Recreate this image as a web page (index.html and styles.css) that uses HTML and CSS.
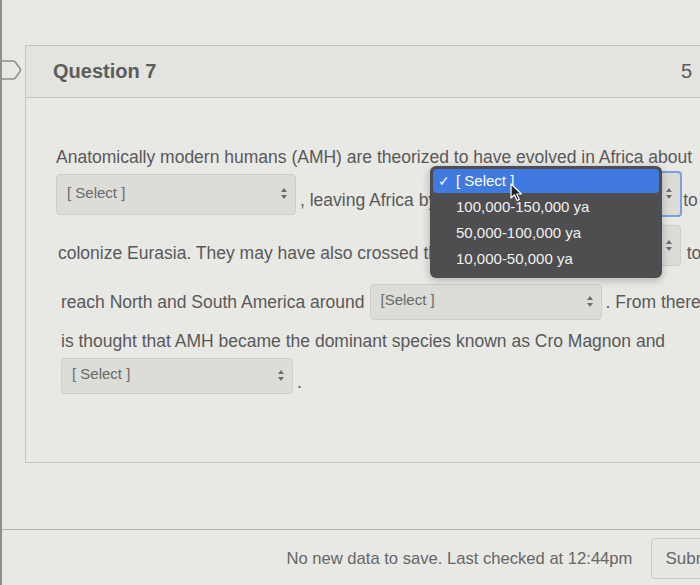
FILE: index.html
```html
<!DOCTYPE html>
<html lang="en">
<head>
    <meta charset="UTF-8">
    <meta name="viewport" content="width=device-width, initial-scale=1.0">
    <title>Quiz - Question 7</title>
    <link rel="stylesheet" href="styles.css">
</head>
<body>

    <div class="page">
        <div class="question-row">
            <svg class="flag" width="20" height="22" viewBox="0 0 20 22">
                <path d="M-4 2 H11 Q12.5 2 13.5 3.3 L18 9.5 Q19 11 18 12.5 L13.5 18.7 Q12.5 20 11 20 H-4" fill="none" stroke="#8c8c8a" stroke-width="1.5"/>
            </svg>

            <div class="question">
                <div class="q-header">
                    <span class="q-name">Question 7</span>
                    <span class="q-points">5</span>
                </div>

                <!-- question text with the dropdowns -->
                <div class="q-text">
                    <div class="line first">Anatomically modern humans (AMH) are theorized to have evolved in Africa about</div>
                    <div class="line">
                        <div class="select">[ Select ]<span class="arrows"></span></div>
                        <span class="txt low">, leaving Africa by</span>
                        <div class="select focused">[ Select ]<span class="arrows"></span></div>
                        <span class="txt low">to</span>
                    </div>
                    <div class="line">
                        <span class="txt lower">colonize Eurasia. They may have also crossed the</span>
                        <div class="select narrow">[ Select ]<span class="arrows"></span></div>
                        <span class="txt lower">to</span>
                    </div>
                    <div class="line l4">
                        <span class="txt">reach North and South America around</span>
                        <div class="select short">[Select ]<span class="arrows"></span></div>
                        <span class="txt">. From there, it</span>
                    </div>
                    <div class="line l5">is thought that AMH became the dominant species known as Cro Magnon and</div>
                    <div class="line l6">
                        <div class="select short">[ Select ]<span class="arrows"></span></div>
                        <span class="txt">.</span>
                    </div>
                </div>
            </div>
        </div>

        <div class="form-actions">
            <span class="status">No new data to save. Last checked at 12:44pm</span>
            <button class="btn">Submit Quiz</button>
        </div>
    </div>

    <!-- open option list of the focused dropdown -->
    <div class="dropdown">
        <div class="option active"><span class="check">&#10003;</span>[ Select ]</div>
        <div class="option">100,000-150,000 ya</div>
        <div class="option">50,000-100,000 ya</div>
        <div class="option">10,000-50,000 ya</div>
        <svg class="cursor" width="13" height="19" viewBox="0 0 13 19">
            <path d="M1 1 L1 15 L4.5 11.8 L7 17.5 L9.2 16.5 L6.8 11 L11.5 11 Z" fill="#222" stroke="#fff" stroke-width="1.2" stroke-linejoin="round"/>
        </svg>
    </div>

</body>
</html>
```

FILE: styles.css
```css
body {
    font-family: "Liberation Sans", Arial, sans-serif;
    margin: 0;
    padding: 0;
    background-color: #e8e8e5;
    color: #595959;
    overflow: hidden;
    width: 700px;
    height: 585px;
}
.page {
    border-left: 2px solid #8f8f8d;
    height: 585px;
    box-sizing: border-box;
}
.question-row {
    position: relative;
    padding-top: 45px;
    padding-left: 23px;
}
.flag {
    position: absolute;
    left: 0;
    top: 59px;
}
.question {
    width: 700px;
    border: 1px solid #c4c4c1;
    border-right: none;
}
.q-header {
    display: flex;
    justify-content: space-between;
    align-items: center;
    height: 51px;
    padding: 0 34px 0 27px;
    background: #e3e3e0;
    border-bottom: 1px solid #c4c4c1;
}
.q-name {
    font-size: 20px;
    font-weight: bold;
    color: #5c5c5c;
}
.q-points {
    font-size: 20px;
    color: #5c5c5c;
}
.q-text {
    padding: 48px 0 68px 30px;
    font-size: 17.5px;
}
.line {
    display: flex;
    align-items: center;
    white-space: nowrap;
}
.line.first {
    line-height: 22px;
    margin-bottom: 3px;
}
.line + .line {
    margin-top: 8px;
}
.line.first + .line {
    margin-top: 0;
}
.line.l4 {
    margin-top: 18px;
}
.line.l4 .txt:first-child {
    padding-left: 5px;
}
.line.l5 {
    line-height: 22px;
    margin-top: 10px;
    padding-left: 5px;
}
.line.l6 {
    margin-top: 6px;
    padding-left: 5px;
}
.txt.low {
    padding-top: 12px;
}
.txt.lower {
    padding-top: 16px;
    padding-left: 2px;
}
.line.l6 .txt {
    padding-top: 12px;
}
.select {
    position: relative;
    box-sizing: border-box;
    width: 240px;
    height: 41px;
    margin: 0 4px 0 0;
    padding: 9px 10px 0;
    background: #dcdcd9;
    border: 1px solid #cdcdca;
    border-radius: 4px;
    font-size: 15px;
    color: #6a6a6a;
    line-height: 18px;
    flex-shrink: 0;
}
.line .txt + .select {
    margin-left: 5px;
}
.select.short {
    width: 232px;
    height: 36px;
    padding-top: 6px;
}
.select.narrow {
    width: 228px;
}
.select.focused {
    width: 240px;
    margin-right: 1px;
    border: 2px solid #7c9fdc;
    height: 46px;
}
.arrows {
    position: absolute;
    right: 11px;
    top: 50%;
    margin-top: -6px;
    width: 0;
    height: 12px;
}
.arrows::before, .arrows::after {
    content: "";
    position: absolute;
    left: -3px;
    border-left: 3px solid transparent;
    border-right: 3px solid transparent;
}
.arrows::before {
    top: 0;
    border-bottom: 4px solid #6d6d6d;
}
.arrows::after {
    bottom: 1px;
    border-top: 4px solid #6d6d6d;
}
.form-actions {
    display: flex;
    justify-content: flex-end;
    align-items: center;
    gap: 19px;
    width: 770px;
    margin-top: 66px;
    padding-top: 8px;
    border-top: 1px solid #b3b3b0;
}
.status {
    font-size: 16.6px;
    color: #666;
}
.btn {
    font-family: "Liberation Sans", Arial, sans-serif;
    font-size: 17px;
    color: #666;
    height: 41px;
    padding: 0 13px;
    background: #e6e6e3;
    border: 1px solid #c9c9c6;
    border-radius: 4px;
}
.dropdown {
    position: absolute;
    left: 430px;
    top: 166px;
    width: 232px;
    padding: 3px 3px 6px;
    box-sizing: border-box;
    background: #4e4e50;
    border-radius: 6px;
    box-shadow: 0 2px 8px rgba(0, 0, 0, 0.25);
}
.option {
    position: relative;
    height: 26px;
    line-height: 26px;
    padding-left: 23px;
    font-size: 15px;
    color: #f1f1f1;
}
.option.active {
    height: 24px;
    line-height: 24px;
    margin-bottom: 1px;
    background: #4079e0;
    border-radius: 4px;
    color: #fff;
}
.check {
    position: absolute;
    left: 5px;
    font-size: 14px;
}
.cursor {
    position: absolute;
    left: 80px;
    top: 17px;
}
```
